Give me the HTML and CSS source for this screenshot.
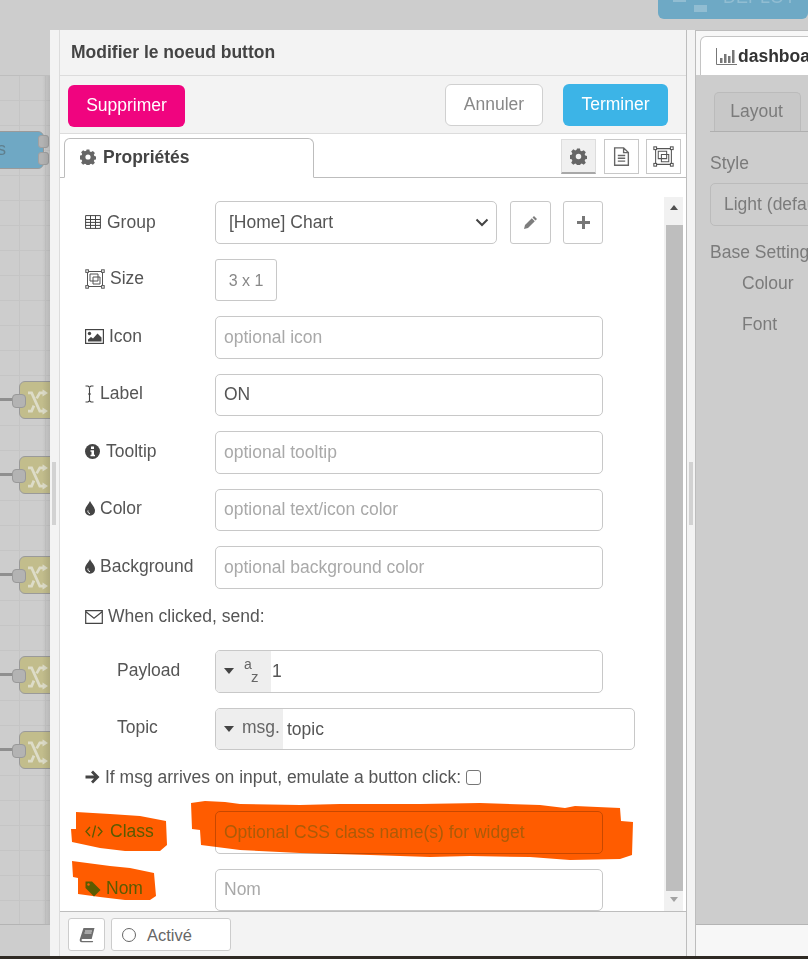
FILE: index.html
```html
<!DOCTYPE html>
<html lang="fr">
<head>
<meta charset="utf-8">
<title>Modifier le noeud button</title>
<link rel="stylesheet" href="styles.css">
</head>
<body>
<div class="app">
  <header class="topbar">
    <div class="deploy">
      <svg class="deploy-icon" width="60" height="19" viewBox="0 0 60 19"><rect x="15" y="-4" width="13" height="6" fill="#91bdd2"/><rect x="36" y="5" width="13" height="7" fill="#91bdd2"/></svg>
      <span class="deploy-text">DEPLOY</span>
    </div>
  </header>
  <div class="main">
    <section class="workspace">
      <div class="ws-head"></div>
      <div class="ws-canvas">
        <div class="node node-blue"><span class="node-s">s</span><i class="port p1"></i><i class="port p2"></i></div>
        <div class="node node-y n1"><i class="wire"></i><i class="port-in"></i><svg class="shuffle" viewBox="0 0 22 28"><use href="#i-shuffle"/></svg></div>
        <div class="node node-y n2"><i class="wire"></i><i class="port-in"></i><svg class="shuffle" viewBox="0 0 22 28"><use href="#i-shuffle"/></svg></div>
        <div class="node node-y n3"><i class="wire"></i><i class="port-in"></i><svg class="shuffle" viewBox="0 0 22 28"><use href="#i-shuffle"/></svg></div>
        <div class="node node-y n4"><i class="wire"></i><i class="port-in"></i><svg class="shuffle" viewBox="0 0 22 28"><use href="#i-shuffle"/></svg></div>
        <div class="node node-y n5"><i class="wire"></i><i class="port-in"></i><svg class="shuffle" viewBox="0 0 22 28"><use href="#i-shuffle"/></svg></div>
      </div>
      <div class="ws-foot"></div>
    </section>
    <div class="strip strip-left"><i class="handle"></i></div>
    <section class="dialog">
      <h1 class="dialog-title">Modifier le noeud button</h1>
      <div class="dialog-actions">
        <button class="btn btn-del">Supprimer</button>
        <span class="spacer"></span>
        <button class="btn btn-cancel">Annuler</button>
        <button class="btn btn-done">Terminer</button>
      </div>
      <div class="tabbar">
        <div class="tab"><svg class="ic-tab" viewBox="0 0 16 16"><use href="#i-cog"/></svg>Propriétés</div>
        <span class="spacer"></span>
        <div class="tab-ic active"><svg width="17" height="17" viewBox="0 0 16 16"><use href="#i-cog"/></svg></div>
        <div class="tab-ic"><svg width="17" height="19" viewBox="0 0 16 18"><use href="#i-file"/></svg></div>
        <div class="tab-ic tab-ic-last"><svg width="21" height="21" viewBox="0 0 20 20"><use href="#i-size"/></svg></div>
      </div>
      <div class="form-wrap">
        <form class="form">
          <div class="row"><label class="lbl lbl-group"><svg class="ic ic-table" width="16" height="14" viewBox="0 0 16 14"><use href="#i-table"/></svg>Group</label><div class="select">[Home] Chart<svg class="chev" width="14" height="9" viewBox="0 0 14 9"><path d="M1.500 1.500 7 7l5.500-5.500" fill="none" stroke="#444" stroke-width="2"/></svg></div><button type="button" class="sq sq-edit"><svg width="15" height="15" viewBox="0 0 15 15"><path d="M11 1l3 3-1.500 1.500-3-3zM8.800 3.200l3 3L5 13l-4 1 1-4z" fill="#7d7d7d"/></svg></button><button type="button" class="sq sq-add"><svg width="13" height="13" viewBox="0 0 13 13"><path d="M5 0h3v5h5v3H8v5H5V8H0V5h5z" fill="#777"/></svg></button></div>
          <div class="row"><label class="lbl"><svg class="ic ic-wide" width="20" height="20" viewBox="0 0 20 20"><use href="#i-size"/></svg>Size</label><div class="size">3 x 1</div></div>
          <div class="row"><label class="lbl"><svg class="ic ic-image" width="19" height="15" viewBox="0 0 19 15"><rect x=".6" y=".6" width="17.800" height="13.800" fill="none" stroke="#444" stroke-width="1.200"/><circle cx="4.500" cy="4.500" r="1.700" fill="#444"/><path d="M3 12.500v-2l3-2.500 2 1.500 4.500-5L16.500 8.500v4z" fill="#444"/></svg>Icon</label><div class="field ph">optional icon</div></div>
          <div class="row"><label class="lbl"><svg class="ic ic-cursor" width="9" height="18" viewBox="0 0 9 18"><path d="M.5 1h2.500L4.500 2.200 6 1h2.500M4.500 2.200v13.600M.5 17H3l1.500-1.200L6 17h2.500M3 9h3" fill="none" stroke="#444" stroke-width="1.100"/></svg>Label</label><div class="field val">ON</div></div>
          <div class="row"><label class="lbl"><svg class="ic ic-info" width="15" height="15" viewBox="0 0 15 15"><circle cx="7.500" cy="7.500" r="7.500" fill="#444"/><rect x="6" y="2.500" width="3" height="2.500" fill="#fff"/><path d="M5.500 6.300H9v4.500h1v1.500H5.500v-1.500h1V7.800h-1z" fill="#fff"/></svg>Tooltip</label><div class="field ph">optional tooltip</div></div>
          <div class="row"><label class="lbl"><svg class="ic ic-drop" width="10" height="15" viewBox="0 0 10 15"><use href="#i-drop"/></svg>Color</label><div class="field ph">optional text/icon color</div></div>
          <div class="row"><label class="lbl"><svg class="ic ic-drop" width="10" height="15" viewBox="0 0 10 15"><use href="#i-drop"/></svg>Background</label><div class="field ph">optional background color</div></div>
          <div class="line line-send"><svg class="ic ic-mail" width="18" height="14" viewBox="0 0 18 14"><path d="M.7.700h16.600v12.600H.7zM.9 1.700 9 8.200l8.100-6.500" fill="none" stroke="#444" stroke-width="1.200"/></svg>When clicked, send:</div>
          <div class="row"><label class="lbl lbl-sub">Payload</label><div class="typed typed-a"><div class="tprefix tp-a"><i class="caret"></i><span class="az"><span>a</span><span class="z">z</span></span></div><div class="tval">1</div></div></div>
          <div class="row"><label class="lbl lbl-sub">Topic</label><div class="typed typed-b"><div class="tprefix tp-b"><i class="caret"></i><span class="msg">msg.</span></div><div class="tval tval-b">topic</div></div></div>
          <div class="line line-if"><svg class="ic ic-arrow" width="15" height="14" viewBox="0 0 15 14"><path d="M8 .5 14.500 7 8 13.500 6 11.500 9 8.500H.5v-3H9L6 2.500z" fill="#444"/></svg>If msg arrives on input, emulate a button click:<i class="check"></i></div>
          <div class="row"><label class="lbl lbl-mark"><svg class="ic ic-code" width="18" height="13" viewBox="0 0 18 13"><path d="M5 2 1 6.500 5 11M13 2l4 4.500-4 4.500M10.500.5l-3 12" fill="none" stroke="#5b5b00" stroke-width="1.300"/></svg>Class</label><div class="field"><span class="mark-text">Optional CSS class name(s) for widget</span></div></div>
          <div class="row row-last"><label class="lbl lbl-mark"><svg class="ic ic-tag" width="16" height="16" viewBox="0 0 16 16"><path d="M.5.500h6.500l8.500 8.500-6.500 6.500L.5 7z" fill="#5b5b00"/><circle cx="3.500" cy="3.500" r="1.200" fill="#ff5c00"/></svg>Nom</label><div class="field ph">Nom</div></div>
        </form>
        <div class="scrollbar">
          <span class="sb-arrow sb-up"></span>
          <div class="sb-track"><div class="sb-thumb"></div></div>
          <span class="sb-arrow sb-down"></span>
        </div>
      </div>
      <div class="dialog-foot">
        <button class="foot-book"><svg width="16" height="16" viewBox="0 0 16 16"><path d="M4.500 1H15.500l-2.800 11H3.500c-1.300 0-1.300 2 0 2h10.700l-.5 1.300H2.800C1 15.300 .4 13.800.8 12.300z" fill="#6e6e6e"/><path d="M6 4h7M5.500 6h7" stroke="#fff" stroke-width=".8"/></svg></button>
        <button class="foot-state"><i class="ring"></i>Activé</button>
      </div>
    </section>
    <div class="strip strip-right"><i class="handle"></i></div>
    <aside class="sidebar">
      <div class="side-tabs"><div class="side-tab"><svg class="ic-chart" width="21" height="17" viewBox="0 0 21 17"><path d="M.5 0v16.500H21" fill="none" stroke="#777" stroke-width="1"/><path d="M4 10h2.500v5H4zM8 6h2.500v9H8zM12 8h2.500v7H12zM16 2h2.500v13H16z" fill="#777"/></svg>dashboard</div></div>
      <div class="side-body">
        <div class="side-subtabs"><div class="side-subtab">Layout</div></div>
        <div class="side-lbl">Style</div>
        <div class="side-select">Light (default)</div>
        <div class="side-lbl side-base">Base Settings</div>
        <div class="side-sub">Colour</div>
        <div class="side-sub">Font</div>
      </div>
      <div class="side-foot"></div>
    </aside>
  </div>
  <div class="bottom-edge"></div>
  <svg class="scribble" width="808" height="959" viewBox="0 0 808 959" aria-hidden="true">
    <path d="M76 812 110 814 140 816 166 821 167 845 160 851 125 851 100 848 72 842 71 829 76 829z"/>
    <path d="M72 861 110 866 130 868 154 873 156 896 150 900 125 900 100 897 78 894 78 878 73 877z"/>
    <path d="M191 803 205 801 225 802 240 804 300 805 340 804 420 804 480 803 540 805 565 808 575 806 620 808 621 821 633 822 632 855 620 859 570 860 530 857 470 856 430 857 370 855 300 853 240 850 201 845 200 830 192 829z"/>
  </svg>
</div>
<svg class="defs" width="0" height="0" aria-hidden="true">
  <defs>
    <symbol id="i-cog" viewBox="0 0 16 16"><path fill-rule="evenodd" d="M6.600.5h2.800l.4 2 1.300.6 1.800-1.100 2 2-1.100 1.800.6 1.300 2 .4v2.800l-2 .4-.6 1.300 1.100 1.800-2 2-1.800-1.100-1.300.6-.4 2H6.600l-.4-2-1.300-.6-1.800 1.100-2-2 1.100-1.800-.6-1.300-2-.4V6.700l2-.4.6-1.300L1.100 3.200l2-2 1.800 1.100 1.300-.6zM8 5.400a2.600 2.600 0 1 0 0 5.200 2.600 2.600 0 0 0 0-5.200z" fill="#666"/></symbol>
    <symbol id="i-file" viewBox="0 0 16 18"><path d="M1.500.8h8.500l4.500 4.500v12H1.500zM10 .8v4.500h4.500M4.500 8h7M4.500 10.700h7M4.500 13.400h7" fill="none" stroke="#666" stroke-width="1.300"/></symbol>
    <symbol id="i-size" viewBox="0 0 20 20"><g fill="none" stroke="#555" stroke-width="1"><path d="M2.500 2.500h15v15h-15z"/><path d="M5 5h8v7H5zM8 8h7v7H8z"/></g><g fill="#fff" stroke="#555" stroke-width="1"><rect x=".8" y=".8" width="2.600" height="2.600"/><rect x="16.600" y=".8" width="2.600" height="2.600"/><rect x=".8" y="16.600" width="2.600" height="2.600"/><rect x="16.600" y="16.600" width="2.600" height="2.600"/></g></symbol>
    <symbol id="i-table" viewBox="0 0 16 14"><path d="M.6.600h14.800v12.800H.6zM.6 4.500h14.800M.6 7.400h14.800M.6 10.400h14.800M5.500 .6v12.800M10.500 .6v12.800" fill="none" stroke="#444" stroke-width="1"/></symbol>
    <symbol id="i-drop" viewBox="0 0 10 15"><path d="M5 0c1 3 5 6 5 9.700A5 5 0 0 1 0 9.700C0 6 4 3 5 0z" fill="#444"/><path d="M3 9.500c-.5 1.500.5 3 2 3" fill="none" stroke="#fff" stroke-width="1"/></symbol>
    <symbol id="i-shuffle" viewBox="0 0 22 28"><path d="M0 4h4l9 20h4M0 24h4l2.500-6M9.500 10 13 4h4" fill="none" stroke="#dddcc8" stroke-width="3"/><path d="M16 0l6 4-6 4zM16 20l6 4-6 4z" fill="#dddcc8"/></symbol>
  </defs>
</svg>
</body>
</html>
```
FILE: styles.css
```css
* { box-sizing: border-box; }
html, body { margin: 0; padding: 0; }
body {
  width: 808px;
  height: 959px;
  overflow: hidden;
  font-family: "Liberation Sans", Arial, sans-serif;
  font-size: 17.5px;
  color: #555;
  background: #cdcdcd;
}
button { font-family: inherit; font-size: inherit; cursor: default; }
i { display: block; font-style: normal; }
.defs { position: absolute; }
.app { position: relative; width: 808px; height: 959px; display: flex; flex-direction: column; }
.spacer { flex: 1; }

/* top bar */
.topbar { height: 30px; flex: none; background: #cdcdcd; position: relative; }
.deploy {
  position: absolute; left: 658px; top: 0; width: 150px; height: 19px;
  background: #6ea9c5; border-radius: 0 0 6px 6px; overflow: hidden;
}
.deploy-icon { position: absolute; left: 0; top: 0; }
.deploy-text { position: absolute; left: 65px; top: -13px; font-size: 18px; color: #91bdd2; }

.main { flex: 1; display: flex; min-height: 0; }

/* workspace */
.workspace { width: 50px; flex: none; display: flex; flex-direction: column; position: relative; overflow: hidden; }
.ws-head { height: 46px; flex: none; background: #cdcdcd; border-bottom: 1px solid #bebebe; }
.ws-canvas {
  height: 848px; flex: none; position: relative;
  background-color: #cdcdcd;
  background-image:
    repeating-linear-gradient(to bottom, transparent 0 24px, #c5c5c5 24px 25px),
    linear-gradient(to right, transparent 0 19px, #c5c5c5 19px 20px, transparent 20px 45px, #c5c5c5 45px 46px, transparent 46px);
}
.ws-canvas::after {
  content: ""; position: absolute; top: 0; bottom: 0; right: 0; width: 8px;
  background: linear-gradient(to right, rgba(0,0,0,0), rgba(0,0,0,.1));
}
.ws-foot { flex: 1; background: #cdcdcd; border-top: 1px solid #b4b4b4; }
.node { position: absolute; height: 38px; border: 1px solid #9a9a9a; }
.node-blue { left: -30px; top: 55px; width: 74px; background: #6fa8c4; border-radius: 6px; }
.node-s { position: absolute; right: 37px; top: 7px; color: #5f7f8d; font-size: 17.500px; }
.port { position: absolute; right: -6px; width: 11px; height: 13px; background: #b3b3b3; border: 1px solid #a0a0a0; border-radius: 3px; }
.p1 { top: 3px; }
.p2 { top: 20px; }
.node-y { left: 19px; width: 40px; background: #c2bd8c; border-radius: 6px; }
.n1 { top: 305px; }
.n2 { top: 380px; }
.n3 { top: 480px; }
.n4 { top: 580px; }
.n5 { top: 655px; }
.wire { position: absolute; left: -20px; top: 16px; width: 14px; height: 3px; background: #8f8f8f; }
.port-in { position: absolute; left: -8px; top: 12px; width: 14px; height: 14px; background: #b3b3b3; border: 1px solid #999; border-radius: 4px; }
.shuffle { position: absolute; left: 8px; top: 7px; width: 20px; height: 26px; }

.strip { width: 10px; flex: none; background: #f3f3f3; position: relative; }
.strip-left { border-right: 1px solid #dcdcdc; }
.strip-right { width: 10px; border-left: 1px solid #bdbdbd; border-right: 1px solid #bdbdbd; }
.handle { position: absolute; top: 432px; width: 4px; height: 63px; background: #d2d2d2; }
.strip-left .handle { left: 2px; }
.strip-right .handle { left: 2px; }

/* dialog */
.dialog { width: 626px; flex: none; background: #fff; display: flex; flex-direction: column; position: relative; }
.dialog-title {
  margin: 0; height: 46px; flex: none; padding: 0 0 0 11px; line-height: 44px;
  font-size: 17.500px; font-weight: 700; color: #444;
  background: #f3f3f3; border-bottom: 1px solid #dcdcdc;
}
.dialog-actions {
  height: 58px; flex: none; display: flex; align-items: flex-start; padding: 8px 18px 0 8px;
  background: #f3f3f3; border-bottom: 1px solid #dcdcdc;
}
.btn { height: 42px; border-radius: 6px; border: 1px solid transparent; padding: 0 0 2px; }
.btn-del { width: 117px; margin-top: 1px; background: #f0047f; color: #fff; }
.btn-cancel { width: 98px; background: #fff; border-color: #d0d0d0; color: #888; }
.btn-done { width: 105px; margin-left: 20px; background: #3cb4e7; color: #fff; }

.tabbar {
  height: 44px; flex: none; display: flex; align-items: flex-start; padding: 4px 5px 0 4px;
  background: #fff; border-bottom: 1px solid #bdbdbd; position: relative;
}
.tab {
  width: 250px; height: 40px; display: flex; align-items: center; padding: 0 0 2px 15px;
  background: #fff; border: 1px solid #bdbdbd; border-bottom: 1px solid #fff; border-radius: 6px 6px 0 0;
  font-weight: 700; color: #444;
}
.ic-tab { width: 16px; height: 16px; margin-right: 7px; flex: none; }
.tab-ic {
  width: 35px; height: 35px; margin-left: 8px; border: 1px solid #c8c8c8; background: #fff;
  display: flex; align-items: center; justify-content: center; margin-top: 1px;
}
.tab-ic-last { margin-left: 7px; }
.tab-ic.active { background: #f0f0f0; border-bottom: 2px solid #a8a8a8; border-top-color: #ddd; border-left-color: #ddd; border-right-color: #ddd; margin-left: 0; }

.form-wrap { flex: 1; min-height: 0; display: flex; position: relative; overflow: hidden; }
.form { width: 604px; flex: none; padding: 23px 0 0 25px; }
.row { display: flex; align-items: flex-start; height: 42.5px; margin-bottom: 15px; }
.lbl { width: 130px; flex: none; display: flex; align-items: center; height: 40px; color: #555; }
.lbl-group { padding-top: 2px; }
.ic { flex: none; margin-right: 4px; }
.ic-table { margin-right: 6px; }
.ic-image { margin-right: 5px; }
.ic-cursor { margin-right: 6px; }
.ic-info { margin-right: 6px; }
.ic-drop { margin-right: 5px; }
.ic-wide { margin-right: 5px; }
.ic-mail { margin-right: 5px; }
.select, .field, .size, .typed, .sq {
  border: 1px solid #c8c8c8; border-radius: 5px; background: #fff; height: 42.5px;
}
.select { width: 282px; display: flex; align-items: center; justify-content: space-between; padding: 0 7px 0 13px; color: #555; }
.sq { width: 41px; margin-left: 13px; padding: 0; display: flex; align-items: center; justify-content: center; border-radius: 3px; }
.sq-add { width: 40px; margin-left: 12px; }
.size { width: 62px; height: 42px; display: flex; align-items: center; justify-content: center; padding-top: 2px; border-radius: 3px; color: #888; font-size: 16px; }
.field { width: 388px; display: flex; align-items: center; padding: 0 8px; }
.ph { color: #a9a9a9; }
.val { color: #555; }
.line { display: flex; align-items: center; height: 22px; }
.line-send { margin-top: 17px; margin-bottom: 22.500px; }
.lbl-sub { padding-left: 32px; }
.typed { display: flex; overflow: hidden; color: #555; }
.typed-a { width: 388px; }
.typed-b { width: 420px; }
.tprefix { background: #eee; display: flex; align-items: center; padding-left: 8px; flex: none; }
.tp-a { width: 55px; }
.tp-b { width: 67px; }
.caret { width: 0; height: 0; border-left: 5.500px solid transparent; border-right: 5.500px solid transparent; border-top: 6px solid #444; }
.az { display: block; position: relative; width: 14px; height: 28px; margin-left: 10px; font-size: 14px; line-height: 14px; color: #666; }
.az span { display: block; }
.az .z { margin-left: 7px; position: relative; top: -1px; font-size: 15px; }
.msg { margin-left: 8px; color: #666; padding-bottom: 3px; }
.tval { padding-left: 1px; display: flex; align-items: center; }
.tval-b { padding-left: 4px; padding-top: 1px; }
.line-if { margin-top: 16px; margin-bottom: 23px; }
.ic-arrow { margin-right: 5px; }
.check { width: 15px; height: 15px; margin-left: 5px; border: 1.300px solid #767676; border-radius: 3px; background: #fff; }

/* marker scribble: sits over the form, the marked texts above it */
.lbl-mark { position: relative; z-index: 2; color: #5b5b00; }
.mark-text { position: relative; z-index: 2; color: #ad5b07; }
.ic-code { margin-right: 7px; }
.ic-tag { margin-right: 5px; }
.scribble { position: absolute; left: 0; top: 0; pointer-events: none; z-index: 1; mix-blend-mode: multiply; }
.scribble path { fill: #ff5c00; }
.row-last { margin-bottom: 0; }

/* scrollbar */
.scrollbar {
  position: absolute; right: 3px; top: 19px; width: 19px; bottom: 0;
  background: #f1f1f1; display: flex; flex-direction: column; align-items: center;
}
.sb-arrow { width: 0; height: 0; flex: none; border-left: 4.500px solid transparent; border-right: 4.500px solid transparent; }
.sb-up { border-bottom: 5px solid #505050; margin: 8px 0 15px; }
.sb-down { border-top: 5px solid #a3a3a3; margin: 6px 0 9px; }
.sb-track { flex: 1; width: 17px; margin-left: 2px; }
.sb-thumb { height: 100%; background: #bebebe; }

.dialog-foot {
  height: 48px; flex: none; display: flex; align-items: flex-start; gap: 6px; padding: 6px 0 0 8px;
  background: #f3f3f3; border-top: 1px solid #bdbdbd; position: relative; z-index: 3;
}
.foot-book, .foot-state { height: 33px; background: #fff; border: 1px solid #ccc; border-radius: 3px; padding: 0; display: flex; align-items: center; }
.foot-book { width: 37px; justify-content: center; }
.foot-state { width: 120px; padding: 1px 0 0 10px; color: #666; font-size: 16.500px; }
.ring { width: 14px; height: 14px; border: 1.400px solid #666; border-radius: 50%; margin-right: 11px; }

/* sidebar */
.sidebar { flex: 1; display: flex; flex-direction: column; min-width: 0; overflow: hidden; background: #cdcdcd; position: relative; }
.side-tabs { height: 45px; flex: none; padding: 5px 0 0 4px; background: #f7f7f7; border-top: 1px solid #bdbdbd; }
.side-tab {
  width: 140px; height: 39px; display: flex; align-items: center; padding-left: 15px;
  background: #fff; border: 1px solid #c4c4c4; border-bottom: none; border-radius: 6px 6px 0 0;
  font-weight: 700; color: #333; white-space: nowrap;
}
.ic-chart { margin-right: 1px; flex: none; }
.side-body { height: 849px; flex: none; padding: 17px 0 0 14px; background: #cdcdcd; color: #7b7b7b; white-space: nowrap; }
.side-subtabs { padding-left: 4px; border-bottom: 1px solid #afafaf; height: 40px; }
.side-subtab { width: 87px; height: 39px; padding: 0 2px 2px 0; border: 1px solid #bbb; border-bottom: none; border-radius: 5px 5px 0 0; display: flex; align-items: center; justify-content: center; background: #c8c8c8; color: #7b7b7b; }
.side-lbl { margin-top: 20px; height: 22px; line-height: 22px; }
.side-select { margin-top: 9px; width: 200px; height: 43px; border: 1px solid #bbb; border-radius: 5px; display: flex; align-items: center; padding-left: 13px; }
.side-base { margin-top: 15px; }
.side-sub { margin-left: 32px; height: 22px; line-height: 22px; margin-top: 9px; margin-bottom: 19px; }
.side-foot { flex: 1; background: #f7f7f7; border-top: 1px solid #b4b4b4; }

.bottom-edge { position: absolute; left: 0; right: 0; bottom: 0; height: 3px; background: #2f2a24; z-index: 4; }
```
